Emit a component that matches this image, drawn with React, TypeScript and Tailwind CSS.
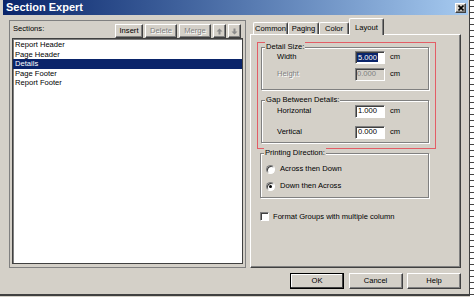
const ui = "font-['Liberation_Sans',Arial,sans-serif]";

const raised =
  "border border-t-white border-l-white border-r-[#404040] border-b-[#404040] shadow-[inset_-1px_-1px_0_#808080] bg-[#d4d0c8]";
const sunken =
  "border border-t-[#808080] border-l-[#808080] border-r-white border-b-white shadow-[inset_1px_1px_0_#404040]";
const etched = "border border-[#808080] shadow-[inset_1px_1px_0_#fff,1px_1px_0_#fff]";
const greyText = "text-[#808080] [text-shadow:1px_1px_0_#fff]";

function ToolButton({ label, width, disabled }: { label: string; width: string; disabled?: boolean }) {
  return (
    <div className={`${raised} ${width} flex h-[14px] items-center justify-center ${disabled ? greyText : "text-black"}`}>
      {label}
    </div>
  );
}

function ArrowButton({ down }: { down?: boolean }) {
  return (
    <div className={`${raised} flex h-[14px] w-[13px] items-center justify-center`}>
      <svg width="7" height="7" viewBox="0 0 7 7" className={down ? "rotate-180" : ""}>
        <path d="M3.5 0.5 L6.5 3.5 L4.5 3.5 L4.5 6.5 L2.5 6.5 L2.5 3.5 L0.5 3.5 Z" fill="#8a8a8a" />
      </svg>
    </div>
  );
}

function Group({ title, className, children }: { title: string; className: string; children?: React.ReactNode }) {
  return (
    <div className={`relative ${etched} ${className}`}>
      <span className="absolute -top-[6px] left-[3px] bg-[#d4d0c8] px-[1px] leading-[10px]">{title}</span>
      {children}
    </div>
  );
}

function Field({ label, value, selected, disabled, className }: {
  label: string;
  value: string;
  selected?: boolean;
  disabled?: boolean;
  className?: string;
}) {
  return (
    <div className={`flex h-[13px] items-center pl-[15px] ${className ?? ""}`}>
      <span className={`w-[78px] ${disabled ? greyText : ""}`}>{label}</span>
      <div className={`${sunken} flex h-[13px] w-[30px] items-center pl-[1px] ${disabled ? "bg-[#d4d0c8]" : "bg-white"}`}>
        <span className={selected ? "bg-[#0a246a] px-[1px] leading-[9px] text-white" : disabled ? "text-[#808080]" : "px-[1px]"}>
          {value}
        </span>
      </div>
      <span className="ml-[5px]">cm</span>
    </div>
  );
}

function Radio({ label, checked, className }: { label: string; checked?: boolean; className?: string }) {
  return (
    <div className={`flex h-[10px] items-center pl-[5px] ${className ?? ""}`}>
      <span className="flex h-[9px] w-[9px] items-center justify-center rounded-full border border-t-[#808080] border-l-[#808080] border-r-white border-b-white bg-white shadow-[inset_1px_1px_0_#404040]">
        {checked && <span className="h-[3px] w-[3px] rounded-full bg-black" />}
      </span>
      <span className="ml-[5px]">{label}</span>
    </div>
  );
}

const sections = ["Report Header", "Page Header", "Details", "Page Footer", "Report Footer"];
const tabs = [
  { name: "Common", w: "w-[35px]" },
  { name: "Paging", w: "w-[31px]" },
  { name: "Color", w: "w-[30px]" },
];

export default function App() {
  return (
    <div className={`${ui} flex h-[297px] w-[474px] overflow-hidden bg-[#d4d0c8] text-[7.6px] text-black`}>
      <div className="flex h-[296px] w-[470px] flex-col border-r border-b-2 border-r-[#404040] border-b-[#404040]">
        {/* title bar */}
        <div className="ml-[3px] mr-[1px] flex h-[15px] items-center justify-between bg-gradient-to-r from-[#0a246a] to-[#a6caf0] pl-[3px] pr-[2px]">
          <span className="text-[11px] font-bold leading-none text-white">Section Expert</span>
          <div className={`${raised} flex h-[10px] w-[11px] items-center justify-center`}>
            <svg width="6" height="6" viewBox="0 0 6 6">
              <path d="M0.5 0.5 L5.5 5.5 M5.5 0.5 L0.5 5.5" stroke="#000" strokeWidth="1.6" />
            </svg>
          </div>
        </div>

        <div className="mt-[3px] flex items-start">
          {/* sections panel */}
          <div className="ml-[9px] mt-[2px] flex h-[248px] w-[237px] flex-col border border-[#808080]">
            <div className="flex h-[17px] items-end justify-between pl-[3px] pr-[4px]">
              <span className="mb-[2px] leading-[14px]">Sections:</span>
              <div className="flex gap-[2px]">
                <ToolButton label="Insert" width="w-[28px]" />
                <ToolButton label="Delete" width="w-[32px]" disabled />
                <ToolButton label="Merge" width="w-[32px]" disabled />
                <ArrowButton />
                <ArrowButton down />
              </div>
            </div>
            <div className="mx-[2px] mb-[3px] flex-1 border border-[#404040] bg-white pt-[1px] shadow-[inset_1px_1px_0_#808080]">
              {sections.map((s) => (
                <div
                  key={s}
                  className={`flex h-[9.5px] items-center pl-[2px] ${s === "Details" ? "bg-[#0a246a] text-white" : ""}`}
                >
                  {s}
                </div>
              ))}
            </div>
          </div>

          {/* tab control */}
          <div className="ml-[4px] flex w-[211px] flex-col">
            <div className="relative z-10 flex h-[16px] items-end pl-[3px]">
              {tabs.map((t) => (
                <div
                  key={t.name}
                  className={`${t.w} flex h-[12px] items-center justify-center rounded-t-[2px] border border-b-0 border-t-white border-l-white border-r-[#404040] shadow-[inset_-1px_0_0_#808080]`}
                >
                  {t.name}
                </div>
              ))}
              <div className="-mb-[1px] flex h-[17px] w-[35px] items-center justify-center rounded-t-[2px] border border-b-0 border-t-white border-l-white border-r-[#404040] bg-[#d4d0c8] pt-[1px] shadow-[inset_-1px_0_0_#808080]">
                Layout
              </div>
            </div>
            <div className="flex h-[234px] flex-col border border-t-white border-l-white border-r-[#404040] border-b-[#404040] shadow-[inset_-1px_-1px_0_#808080]">
              {/* highlighted box */}
              <div className="ml-[6px] mt-[7px] w-[179px] border-[1.5px] border-[#e35d66] pb-[5.5px] pl-[3px]">
                <Group title="Detail Size:" className="mt-[3.5px] h-[43px] w-[168px] pt-[3px]">
                  <Field label="Width" value="5.000" selected />
                  <Field label="Height" value="0.000" disabled className="mt-[4px]" />
                </Group>
                <Group title="Gap Between Details:" className="mt-[10px] h-[43px] w-[168px] pt-[4px]">
                  <Field label="Horizontal" value="1.000" />
                  <Field label="Vertical" value="0.000" className="mt-[8px]" />
                </Group>
              </div>
              <Group title="Printing Direction:" className="ml-[9px] mt-[4px] h-[45px] w-[169px] pt-[10px]">
                <Radio label="Across then Down" />
                <Radio label="Down then Across" checked className="mt-[7px]" />
              </Group>
              <div className="ml-[9px] mt-[14px] flex h-[9px] items-center">
                <span className="h-[9px] w-[9px] border border-t-[#808080] border-l-[#808080] border-r-white border-b-white bg-white shadow-[inset_1px_1px_0_#404040]" />
                <span className="ml-[4px]">Format Groups with multiple column</span>
              </div>
            </div>
          </div>
        </div>

        {/* dialog buttons */}
        <div className="ml-[290px] mt-[5px] flex gap-[4.5px]">
          {["OK", "Cancel", "Help"].map((b) => (
            <div
              key={b}
              className={`${b === "OK" ? "border-[#000] shadow-[inset_-1px_-1px_0_#404040,inset_1px_1px_0_#fff]" : raised} flex h-[16px] w-[54px] items-center justify-center border`}
            >
              {b}
            </div>
          ))}
        </div>
      </div>
      <div className="h-full w-[4px] bg-[repeating-linear-gradient(to_bottom,#444_0_1px,#fff_1px_6px)]" />
    </div>
  );
}
